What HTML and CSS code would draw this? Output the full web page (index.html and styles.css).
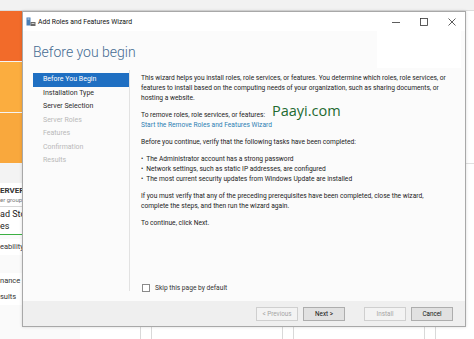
FILE: index.html
```html
<!DOCTYPE html>
<html lang="en">
<head>
<meta charset="utf-8">
<title>Add Roles and Features Wizard</title>
<link rel="stylesheet" href="styles.css">
</head>
<body>
<div class="desk">
  <div class="desk-top"></div>
  <div class="desk-main">
    <div class="desk-side">
      <div class="tile tile-a"></div>
      <div class="tile tile-b"></div>
      <div class="tile tile-c"></div>
      <div class="side-gap"></div>
      <div class="srv-head">
        <div class="srv-title">ERVERS</div>
        <div class="srv-sub">er groups: 1</div>
      </div>
      <div class="srv-name">ad Storage</div>
      <div class="srv-name srv-under">es</div>
      <div class="srv-item srv-first">eability</div>
      <div class="srv-item srv-far">nance</div>
      <div class="srv-item">sults</div>
    </div>
    <div class="desk-rest">
      <div class="welcome"></div>
      <div class="panels">
        <div class="panel"></div>
        <div class="panel"></div>
        <div class="panel"></div>
        <div class="panel"></div>
      </div>
    </div>
  </div>
</div>

<div class="dialog">
  <div class="titlebar">
    <svg class="app-icon" width="10" height="10" viewBox="0 0 10 10">
      <rect x="0.5" y="0.5" width="4" height="8" fill="#4a7fb5"/>
      <rect x="1.5" y="1.5" width="2" height="1" fill="#cfe0f0"/>
      <rect x="4.5" y="5" width="5" height="4" fill="#6a6a6a"/>
      <rect x="5.5" y="6" width="3" height="1" fill="#cfcfcf"/>
    </svg>
    <span class="title-text">Add Roles and Features Wizard</span>
    <div class="win-ctrls">
      <svg width="10" height="10" viewBox="0 0 10 10"><path d="M1 5.5h8" stroke="#333" stroke-width="0.8"/></svg>
      <svg width="10" height="10" viewBox="0 0 10 10"><rect x="1.5" y="1.5" width="7" height="7" fill="none" stroke="#333" stroke-width="0.8"/></svg>
      <svg width="10" height="10" viewBox="0 0 10 10"><path d="M1.5 1.5l7 7M8.5 1.5l-7 7" stroke="#333" stroke-width="0.8"/></svg>
    </div>
  </div>
  <div class="header">
    <h1 class="heading">Before you begin</h1>
    <div class="server-box"></div>
  </div>
  <div class="body">
    <ul class="nav">
      <li class="nav-item active">Before You Begin</li>
      <li class="nav-item">Installation Type</li>
      <li class="nav-item">Server Selection</li>
      <li class="nav-item disabled">Server Roles</li>
      <li class="nav-item disabled">Features</li>
      <li class="nav-item disabled">Confirmation</li>
      <li class="nav-item disabled">Results</li>
    </ul>
    <div class="content">
      <p>This wizard helps you install roles, role services, or features. You determine which roles, role services, or<br>features to install based on the computing needs of your organization, such as sharing documents, or<br>hosting a website.</p>
      <p>To remove roles, role services, or features:<br><a class="link">Start the Remove Roles and Features Wizard</a></p>
      <p>Before you continue, verify that the following tasks have been completed:</p>
      <ul class="bullets">
        <li>The Administrator account has a strong password</li>
        <li>Network settings, such as static IP addresses, are configured</li>
        <li>The most current security updates from Windows Update are installed</li>
      </ul>
      <p>If you must verify that any of the preceding prerequisites have been completed, close the wizard,<br>complete the steps, and then run the wizard again.</p>
      <p>To continue, click Next.</p>
      <label class="skip"><span class="check"></span>Skip this page by default</label>
      <div class="watermark">Paayi.com</div>
    </div>
  </div>
  <div class="footer">
    <button class="btn" disabled>&lt; Previous</button>
    <button class="btn">Next &gt;</button>
    <button class="btn btn-gap" disabled>Install</button>
    <button class="btn">Cancel</button>
  </div>
</div>
</body>
</html>
```
FILE: styles.css
```css
* { box-sizing: border-box; }
html, body { margin: 0; padding: 0; }
body {
  width: 474px;
  height: 339px;
  overflow: hidden;
  position: relative;
  background: #ffffff;
  font-family: Roboto, "Liberation Sans", sans-serif;
  color: #1a1a1a;
}

/* ---------- background (Server Manager) ---------- */
.desk { display: flex; flex-direction: column; height: 100%; overflow: hidden; }
.desk-top { height: 11px; background: #f2f2f2; border-bottom: 1px solid #dcdcdc; flex: none; }
.desk-main { display: flex; flex: 1; min-height: 0; overflow: hidden; }
.desk-side { width: 80px; flex: none; overflow: hidden; background: #fafafa; }
.tile { height: 51px; border-bottom: 1px solid #f4f4f4; }
.tile-a { background: #f26b2a; }
.tile-b { background: #fbad3f; }
.tile-c { background: #f9a83d; }
.side-gap { height: 19px; background: #f3f3f3; }
.srv-head { padding-top: 3px; border-bottom: 1px solid #d8d8d8; background: #ffffff; height: 24px; }
.srv-title { font-size: 8px; font-weight: 700; line-height: 10px; color: #333; white-space: nowrap; }
.srv-sub { font-size: 6px; line-height: 8px; color: #777; white-space: nowrap; }
.srv-name { font-size: 9px; line-height: 10px; color: #222; white-space: nowrap; background: #fff; padding-top: 2px; }
.srv-under { border-bottom: 1px solid #3cb043; padding-bottom: 3px; }
.srv-item { font-size: 7.5px; line-height: 16px; color: #333; white-space: nowrap; background: #fff; }
.srv-first { margin-top: 4px; }
.srv-far { margin-top: 18px; }
.desk-rest { flex: 1; min-width: 0; display: flex; flex-direction: column; overflow: hidden; }
.welcome { height: 153px; flex: none; border-bottom: 1px solid #e0e0e0; }
.panels { flex: 1; display: flex; gap: 10px; margin-left: -71px; margin-top: 60px; }
.panel { width: 132px; flex: none; border-left: 1px solid #d9d9d9; border-right: 1px solid #d9d9d9; }

/* ---------- dialog ---------- */
.dialog {
  position: absolute;
  left: 22px;
  top: 11px;
  width: 444px;
  height: 316px;
  background: #fbfbfb;
  border: 1px solid #a8a8a8;
  display: flex;
  flex-direction: column;
  box-shadow: 0 0 3px rgba(0,0,0,0.15);
}
.titlebar {
  height: 19px;
  flex: none;
  display: flex;
  align-items: center;
  padding-left: 3px;
  background: #ffffff;
}
.app-icon { flex: none; }
.title-text { font-size: 6.8px; margin-left: 2px; color: #111; }
.win-ctrls { margin-left: auto; display: flex; gap: 18px; padding-right: 8px; }

.header {
  height: 39px;
  flex: none;
  display: flex;
  align-items: flex-start;
  padding-left: 10px;
  padding-right: 4px;
}
.heading {
  margin: 12px 0 0;
  font-size: 14px;
  font-weight: 300;
  color: #456b92;
  line-height: 18px;
}
.server-box { margin-left: auto; width: 84px; height: 37px; background: #ffffff; }

.body { flex: 1; display: flex; padding-left: 10px; min-height: 0; }
.nav {
  list-style: none;
  margin: 0;
  padding: 3px 0 0;
  width: 97px;
  flex: none;
  border-right: 1px solid #e2e2e2;
  margin-bottom: 10px;
}
.nav-item {
  height: 13.5px;
  line-height: 13.5px;
  padding-left: 10px;
  font-size: 7px;
  color: #2b2b2b;
  white-space: nowrap;
}
.nav-item.active { background: #1f6fc2; color: #ffffff; }
.nav-item.disabled { color: #b9b9b9; }

.content {
  flex: 1;
  position: relative;
  padding: 3px 0 0 11px;
  font-size: 6.65px;
  line-height: 10px;
  color: #222;
  white-space: nowrap;
  display: flex;
  flex-direction: column;
}
.content p { margin: 0 0 7px; }
.link { color: #2d7fb3; }
.bullets { list-style: none; margin: 0 0 7px; padding: 0; }
.bullets li::before { content: "\2022"; margin-right: 3px; }
.skip { margin-top: auto; margin-bottom: 8px; display: flex; align-items: center; color: #333; }
.check { width: 8px; height: 8px; border: 1px solid #8a8a8a; background: #fff; margin-right: 5px; margin-left: 1px; }
.watermark {
  position: absolute;
  left: 142px;
  top: 31px;
  font-family: "Open Sans", sans-serif;
  font-size: 14.5px;
  line-height: 20px;
  color: #1e6a30;
}

.footer {
  height: 25px;
  flex: none;
  background: #efefef;
  display: flex;
  align-items: center;
  justify-content: flex-end;
  gap: 5px;
  padding-right: 12px;
}
.btn {
  width: 42px;
  height: 14px;
  padding: 0;
  font-family: Roboto, "Liberation Sans", sans-serif;
  font-size: 6.3px;
  color: #111;
  background: #e1e1e1;
  border: 1px solid #adadad;
}
.btn:disabled { background: #f3f3f3; border-color: #cfcfcf; color: #a4a4a4; }
.btn-gap { margin-left: 14px; }
```
